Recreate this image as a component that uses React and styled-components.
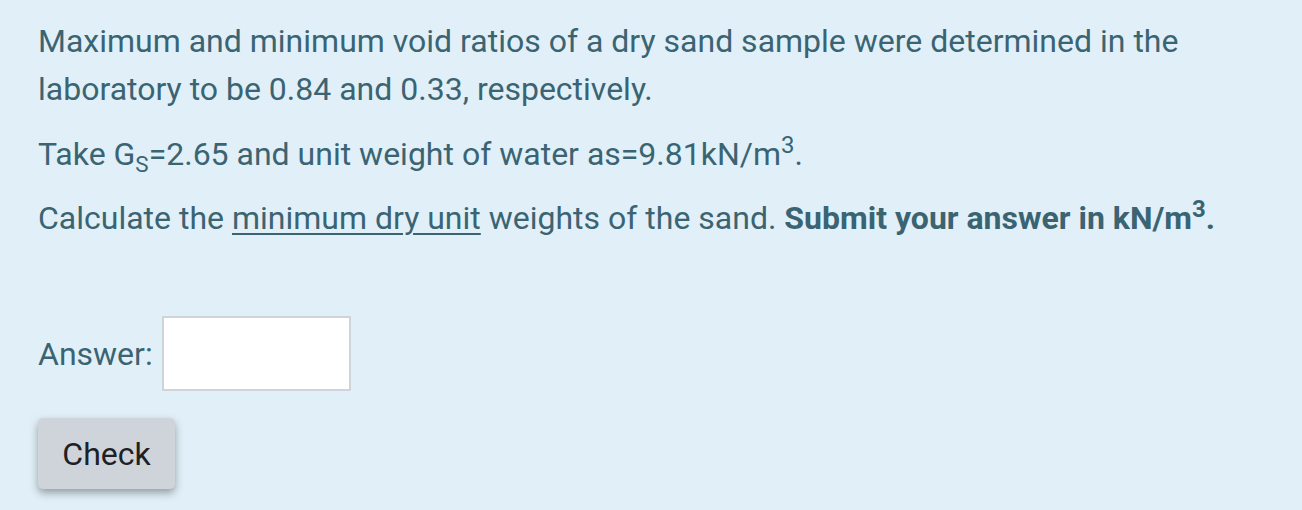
import React, { useState } from "react";
import styled, { createGlobalStyle } from "styled-components";

const GlobalStyle = createGlobalStyle`
  html, body {
    margin: 0;
    padding: 0;
    background: #e1f0f8;
  }
  body {
    font-family: Roboto, "Liberation Sans", sans-serif;
  }
`;

const Formulation = styled.div`
  background-color: #e1f0f8;
  color: #3b6473;
  width: 1302px;
  height: 510px;
  box-sizing: border-box;
  padding: 17px 38px 0;
  font-size: 32px;
  line-height: 48px;
`;

const Para = styled.p`
  margin: 0 0 16.5px;
`;

const Under = styled.span`
  text-decoration: underline;
  text-decoration-thickness: 2px;
  text-underline-offset: 4px;
`;

const Strong = styled.strong`
  font-weight: 700;
`;

const Sup = styled.sup`
  font-size: 0.75em;
  line-height: 0;
`;

const Sub = styled.sub`
  font-size: 0.7em;
  line-height: 0;
  vertical-align: -0.3em;
`;

const AnswerRow = styled.div`
  display: flex;
  align-items: center;
  gap: 9px;
  margin-top: 74px;
`;

const Label = styled.label`
  font-size: 32px;
`;

const Input = styled.input`
  width: 189px;
  height: 75px;
  box-sizing: border-box;
  border: 2px solid #ced4da;
  background: #fff;
  font-family: inherit;
  font-size: 30px;
  padding: 0 12px;
  outline: none;
`;

const Button = styled.button`
  margin-top: 27px;
  width: 137px;
  height: 71px;
  border: none;
  border-radius: 5px;
  background-color: #ced4da;
  color: #1d2125;
  font-family: Roboto, "Liberation Sans", sans-serif;
  font-size: 32px;
  box-shadow: 0 4px 9px rgba(0, 0, 0, 0.35);
  cursor: pointer;
`;

const App = () => {
  const [value, setValue] = useState("");
  return (
    <>
      <GlobalStyle />
      <Formulation>
        <Para>
          Maximum and minimum void ratios of a dry sand sample were determined in the laboratory to be 0.84 and 0.33,
          respectively.
        </Para>
        <Para>
          Take G<Sub>S</Sub>=2.65 and unit weight of water as=9.81kN/m<Sup>3</Sup>.
        </Para>
        <Para>
          Calculate the <Under>minimum dry unit</Under> weights of the sand.{" "}
          <Strong>
            Submit your answer in kN/m<Sup>3</Sup>.
          </Strong>
        </Para>
        <AnswerRow>
          <Label htmlFor="answer">Answer:</Label>
          <Input id="answer" type="text" value={value} onChange={e => setValue(e.target.value)} />
        </AnswerRow>
        <Button type="button">Check</Button>
      </Formulation>
    </>
  );
};

export default App;
